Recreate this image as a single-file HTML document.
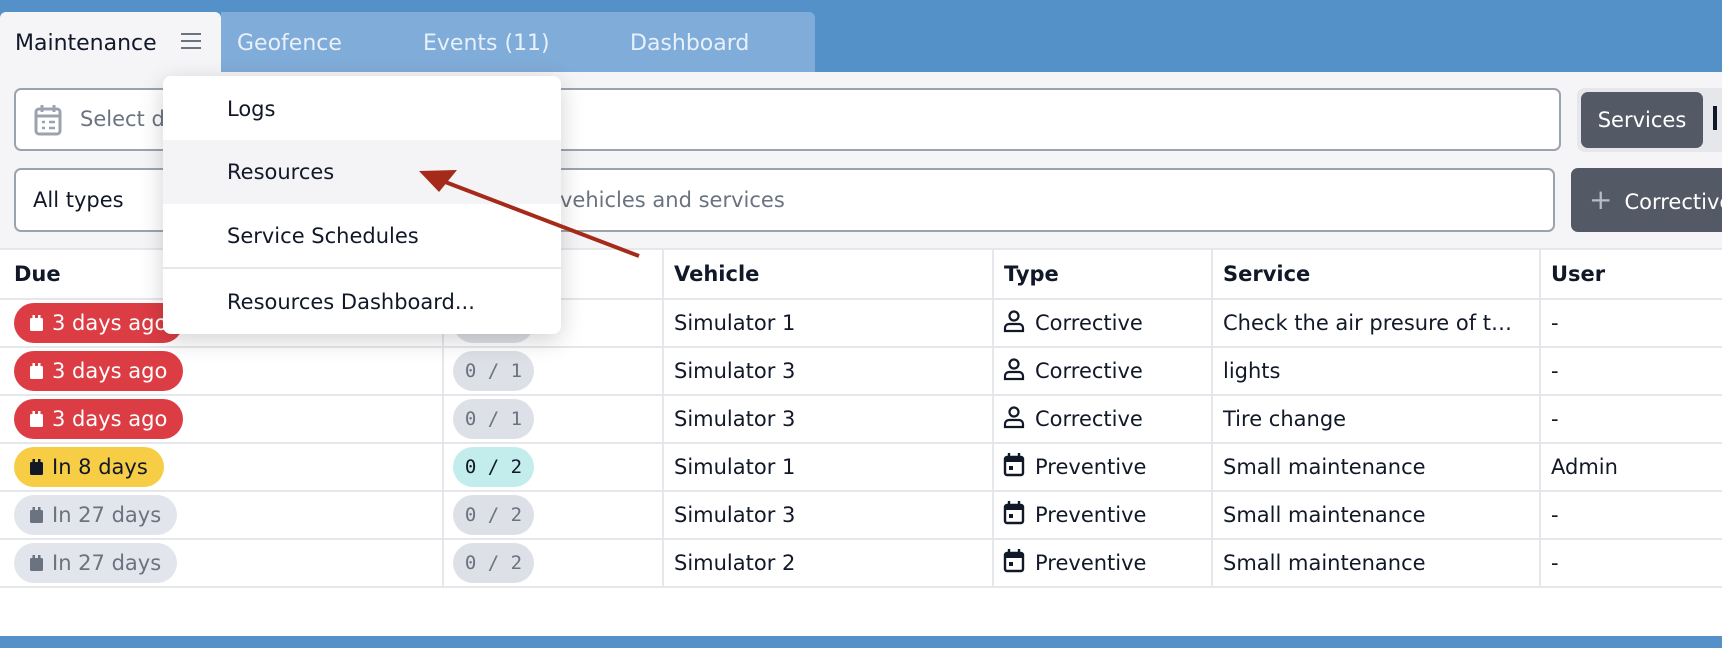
<!DOCTYPE html>
<html><head><meta charset="utf-8"><style>
*{box-sizing:border-box;margin:0;padding:0}
body{width:1722px;height:648px;overflow:hidden;background:#f5f5f7;font-family:"DejaVu Sans","Liberation Sans",sans-serif;color:#111827;position:relative;font-size:21px}
.abs{position:absolute}
.top{left:0;top:0;width:1722px;height:72px;background:#5591c9}
.tabs2{left:221px;top:12px;width:594px;height:60px;background:#80acd9;border-radius:0 6px 0 0}
.tab1{left:0;top:12px;width:221px;height:60px;background:#f5f5f7;border-radius:6px 6px 0 0}
.tt{top:31px;font-size:22px;color:#e8f0f9}
.inp{background:#fff;border:2px solid #9ca3af;border-radius:7px}
.btn{background:#535a66;color:#fff;border-radius:7px}
table{border-collapse:collapse;position:absolute;left:0;top:248px;width:1722px;background:#fff;table-layout:fixed}
td,th{border-right:2px solid #e5e7eb;border-bottom:2px solid #e5e7eb;height:48px;text-align:left;padding:0 0 0 10px;font-size:21px;white-space:nowrap;overflow:hidden}
td:first-child,th:first-child{padding-left:14px}
td:last-child,th:last-child{border-right:none}
th{height:50px;font-weight:bold;border-top:2px solid #e5e7eb}
.b{display:inline-block;height:40px;line-height:40px;border-radius:20px;padding:0 16px 0 16px;font-size:21px}
.red{background:#dc3c43;color:#fff}.yel{background:#f7cd46;color:#111827}.gry{background:#e2e5eb;color:#6b7280}
.cnt{display:inline-block;height:40px;line-height:40px;border-radius:20px;width:81px;text-align:center;background:#dde0e6;color:#6b7280;font-family:"DejaVu Sans Mono",monospace;font-size:19px;margin-left:-1px}
.cy{background:#c3ecec;color:#111827}
.cal{display:inline-block;width:13px;height:16px;margin-right:9px;vertical-align:-1px}
.menu{left:163px;top:76px;width:398px;height:258px;background:#fff;border-radius:8px;box-shadow:0 6px 24px rgba(0,0,0,.18)}
.mi{position:absolute;left:0;width:398px;padding-left:64px;font-size:21px;color:#111827}
.u,.p{display:inline-block;width:22px;height:22px;margin-right:9px;vertical-align:-3px}
</style></head><body>
<div class="abs top"></div>
<div class="abs tabs2"></div>
<div class="abs tab1"></div>
<div class="abs tt" style="left:15px;color:#111827">Maintenance</div>
<svg class="abs" style="left:180px;top:32px" width="22" height="18"><path d="M1 2h20M1 9h20M1 16h20" stroke="#6b7280" stroke-width="2"/></svg>
<div class="abs tt" style="left:237px">Geofence</div>
<div class="abs tt" style="left:423px">Events (11)</div>
<div class="abs tt" style="left:630px">Dashboard</div>

<div class="abs inp" style="left:14px;top:88px;width:1547px;height:63px"></div>
<svg class="abs" style="left:34px;top:104px" width="28" height="32"><rect x="2" y="5" width="24" height="25" rx="3" fill="none" stroke="#9ca3af" stroke-width="3"/><path d="M8 1v7M20 1v7M3 12h22" stroke="#9ca3af" stroke-width="3"/><path d="M8 18h3M15 18h6M8 24h3M15 24h6" stroke="#9ca3af" stroke-width="2.5"/></svg>
<div class="abs" style="left:80px;top:107px;color:#6b7280">Select d</div>
<div class="abs" style="left:1577px;top:88px;width:160px;height:64px;background:#e5e7eb;border-radius:8px"></div>
<div class="abs btn" style="left:1581px;top:92px;width:122px;height:56px;line-height:56px;text-align:center;font-size:21px">Services</div>
<div class="abs" style="left:1713px;top:106px;width:4px;height:24px;background:#111827"></div>
<div class="abs inp" style="left:14px;top:168px;width:1541px;height:64px"></div>
<div class="abs" style="left:33px;top:188px">All types</div>
<div class="abs" style="left:560px;top:188px;color:#6b7280">vehicles and services</div>
<div class="abs btn" style="left:1571px;top:168px;width:160px;height:64px;line-height:64px;padding-left:18px;font-size:21px;border-radius:7px 0 0 7px;overflow:hidden;white-space:nowrap"><span style="color:#b7bcc4;font-size:28px;margin-right:12px">+</span>Corrective</div>

<svg width="0" height="0" style="position:absolute"><defs><g id="bc"><rect x="0" y="3" width="13" height="13" rx="1.5" fill="currentColor"/><rect x="2.5" y="0" width="2.5" height="4" fill="currentColor"/><rect x="8" y="0" width="2.5" height="4" fill="currentColor"/></g></defs></svg>
<table>
<colgroup><col style="width:443px"><col style="width:220px"><col style="width:330px"><col style="width:219px"><col style="width:328px"><col></colgroup>
<tr><th>Due</th><th></th><th>Vehicle</th><th>Type</th><th>Service</th><th>User</th></tr>
<tr><td><span class="b red"><svg class="cal"><use href="#bc"/></svg>3 days ago</span></td><td><span class="cnt">0 / 1</span></td><td>Simulator 1</td><td><span class="u"></span>Corrective</td><td>Check the air presure of t…</td><td>-</td></tr>
<tr><td><span class="b red"><svg class="cal"><use href="#bc"/></svg>3 days ago</span></td><td><span class="cnt">0 / 1</span></td><td>Simulator 3</td><td><span class="u"></span>Corrective</td><td>lights</td><td>-</td></tr>
<tr><td><span class="b red"><svg class="cal"><use href="#bc"/></svg>3 days ago</span></td><td><span class="cnt">0 / 1</span></td><td>Simulator 3</td><td><span class="u"></span>Corrective</td><td>Tire change</td><td>-</td></tr>
<tr><td><span class="b yel"><svg class="cal"><use href="#bc"/></svg>In 8 days</span></td><td><span class="cnt cy">0 / 2</span></td><td>Simulator 1</td><td><span class="p"></span>Preventive</td><td>Small maintenance</td><td>Admin</td></tr>
<tr><td><span class="b gry"><svg class="cal"><use href="#bc"/></svg>In 27 days</span></td><td><span class="cnt">0 / 2</span></td><td>Simulator 3</td><td><span class="p"></span>Preventive</td><td>Small maintenance</td><td>-</td></tr>
<tr><td><span class="b gry"><svg class="cal"><use href="#bc"/></svg>In 27 days</span></td><td><span class="cnt">0 / 2</span></td><td>Simulator 2</td><td><span class="p"></span>Preventive</td><td>Small maintenance</td><td>-</td></tr>
</table>
<div class="abs" style="left:0;top:588px;width:1722px;height:48px;background:#fff"></div>
<svg class="abs" style="left:1003px;top:310px" width="22" height="160">
<g fill="none" stroke="#111827" stroke-width="2.2">
<circle cx="11" cy="6" r="4.5"/><path d="M2 21v-3a4 4 0 0 1 4-4h10a4 4 0 0 1 4 4v3z"/>
<g transform="translate(0,48)"><circle cx="11" cy="6" r="4.5"/><path d="M2 21v-3a4 4 0 0 1 4-4h10a4 4 0 0 1 4 4v3z"/></g>
<g transform="translate(0,96)"><circle cx="11" cy="6" r="4.5"/><path d="M2 21v-3a4 4 0 0 1 4-4h10a4 4 0 0 1 4 4v3z"/></g>
</g></svg>
<svg class="abs" style="left:1003px;top:453px" width="22" height="160">
<g id="c"><rect x="2" y="4" width="18" height="18" rx="2" fill="none" stroke="#111827" stroke-width="2.4"/><path d="M2 5h18v4H2z" fill="#111827"/><path d="M6 0v5M16 0v5" stroke="#111827" stroke-width="2.4"/><rect x="6" y="13" width="4" height="4" fill="#111827"/></g>
<use href="#c" y="48"/><use href="#c" y="96"/>
</svg>
<div class="abs" style="left:0;top:636px;width:1722px;height:12px;background:#5591c9"></div>

<div class="abs menu">
<div class="mi" style="top:21px">Logs</div>
<div class="mi" style="top:64px;height:64px;background:#f4f4f6"></div>
<div class="mi" style="top:84px">Resources</div>
<div class="mi" style="top:148px">Service Schedules</div>
<div class="abs" style="left:0;top:191px;width:398px;height:2px;background:#e5e7eb"></div>
<div class="mi" style="top:214px">Resources Dashboard...</div>
</div>
<svg class="abs" style="left:0;top:0" width="1722" height="648"><path d="M639 256L440 180" stroke="#a52a1a" stroke-width="4"/><path d="M419 171l38-1-18 22z" fill="#a52a1a"/></svg>
</body></html>
